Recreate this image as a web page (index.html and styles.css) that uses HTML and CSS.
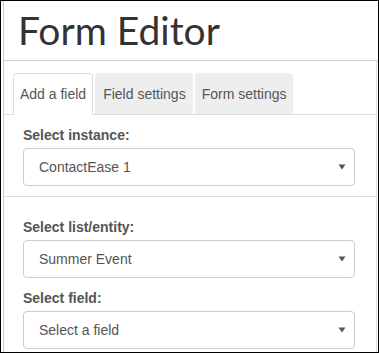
FILE: index.html
```html
<!DOCTYPE html>
<html>
<head>
<meta charset="utf-8">
<link rel="stylesheet" href="styles.css">
</head>
<body>
<div class="frame">
  <div class="panel">
    <div class="header"><h1 class="title">Form Editor</h1></div>
    <div class="body">
      <ul class="tabs">
        <li class="tab active">Add a field</li>
        <li class="tab">Field settings</li>
        <li class="tab">Form settings</li>
      </ul>
      <div class="section first">
        <div class="label">Select instance:</div>
        <div class="select"><span class="value">ContactEase 1</span><svg class="arrow" width="8" height="6" viewBox="0 0 8 6"><path d="M0.5 0.5 H7.5 L4 5.5 Z" fill="#555"/></svg></div>
      </div>
      <div class="section second">
        <div class="label">Select list/entity:</div>
        <div class="select"><span class="value">Summer Event</span><svg class="arrow" width="8" height="6" viewBox="0 0 8 6"><path d="M0.5 0.5 H7.5 L4 5.5 Z" fill="#555"/></svg></div>
        <div class="label field">Select field:</div>
        <div class="select"><span class="value">Select a field</span><svg class="arrow" width="8" height="6" viewBox="0 0 8 6"><path d="M0.5 0.5 H7.5 L4 5.5 Z" fill="#555"/></svg></div>
      </div>
    </div>
  </div>
</div>
</body>
</html>
```
FILE: styles.css
```css
html, body {
  margin: 0;
  padding: 0;
  background: #fff;
}
.frame {
  width: 379px;
  height: 353px;
  box-sizing: border-box;
  border: 1px solid #000;
  padding-left: 2px;
  overflow: hidden;
  font-family: "Liberation Sans", Arial, sans-serif;
  font-size: 14px;
}
.panel {
  height: 100%;
  border-left: 1px solid #ccc;
}
.header {
  height: 59px;
  border-bottom: 1px solid #ccc;
}
.title {
  margin: 0;
  padding-left: 14px;
  font-family: "Lato", sans-serif;
  font-weight: normal;
  font-size: 39px;
  line-height: 59px;
  color: #333;
}
.body {
  margin-right: 1px;
  border-right: 1px solid #ddd;
  height: 292px;
}
.tabs {
  list-style: none;
  margin: 0;
  padding: 12px 0 0 9px;
  display: flex;
  gap: 2px;
  border-bottom: 1px solid #ddd;
}
.tab {
  height: 40px;
  line-height: 40px;
  padding: 0 6px;
  border: 1px solid #eee;
  border-bottom: none;
  border-radius: 4px 4px 0 0;
  background: #eee;
  color: #555;
  margin-bottom: -1px;
}
.tab.active {
  background: #fff;
  border-color: #ddd;
  height: 41px;
}
.tab:nth-child(2) {
  padding: 0 6px 0 7px;
}
.section {
  padding: 10px 21px 0 19px;
}
.section.first {
  padding-bottom: 10px;
  border-bottom: 1px solid #ddd;
}
.section.second {
  padding-top: 20px;
}
.label {
  font-weight: bold;
  color: #555;
  line-height: 20px;
  margin-bottom: 3px;
}
.label.field {
  margin-top: 10px;
}
.select {
  height: 38px;
  box-sizing: border-box;
  border: 1px solid #ccc;
  border-radius: 4px;
  display: flex;
  align-items: center;
  justify-content: space-between;
  padding: 0 8px 0 15px;
  color: #555;
}
.arrow {
  display: block;
}
```
